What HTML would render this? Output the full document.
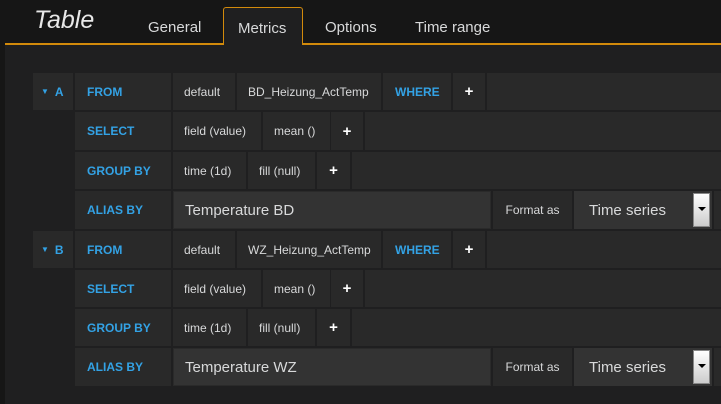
<!DOCTYPE html>
<html><head><style>
body{margin:0;width:721px;height:404px;background:#161616;position:relative;overflow:hidden;font-family:"Liberation Sans",sans-serif;}
.a{position:absolute;box-sizing:border-box;}
.c{position:absolute;background:#292929;color:#d8d9da;font-size:12px;display:flex;align-items:center;box-sizing:border-box;padding-left:11px;white-space:nowrap;}
.l{color:#33a2e5;font-weight:bold;font-size:12px;padding-left:12px;}
.p{justify-content:center;padding:0;font-weight:bold;font-size:15px;color:#fff;}
.in{background:#333;font-size:15px;border:1px solid #2a2a2a;}
.fa{font-size:12px;justify-content:center;padding:0;}
.sel{font-size:15px;background:#333;padding-left:15px;}
.btn{position:absolute;right:2px;top:2px;bottom:2px;width:17px;background:linear-gradient(#fff,#ccc);border:1px solid #888;box-sizing:border-box;}
.btn:after{content:"";position:absolute;left:4px;top:13px;border:4px solid transparent;border-top:4px solid #000;}
.tab{position:absolute;top:19px;color:#d8d9da;font-size:15px;}
</style></head><body>
<div class="a" style="left:5px;top:45px;width:716px;height:359px;background:#1f1f20"></div>
<div class="a" style="left:5px;top:43px;width:716px;height:2px;background:#d28a0b"></div>
<div class="a" style="left:34px;top:6px;color:#e8e8e8;font-size:25px;font-style:italic">Table</div>
<div class="tab" style="left:148px">General</div>
<div class="a" style="left:223px;top:7px;width:80px;height:38px;background:#1f1f20;border:1px solid #d28a0b;border-bottom:none;border-radius:3px 3px 0 0"></div>
<div class="tab" style="left:238px;top:20px">Metrics</div>
<div class="tab" style="left:325px">Options</div>
<div class="tab" style="left:415px">Time range</div>

<!-- A -->
<div class="c l" style="left:33px;top:73px;width:40px;height:37px;padding-left:8px"><span style="font-size:8px;margin-right:6px">▼</span>A</div>
<div class="c l" style="left:75px;top:73px;width:96px;height:37px">FROM</div>
<div class="c" style="left:173px;top:73px;width:62px;height:37px">default</div>
<div class="c" style="left:237px;top:73px;width:144px;height:37px">BD_Heizung_ActTemp</div>
<div class="c l" style="left:383px;top:73px;width:68px;height:37px">WHERE</div>
<div class="c p" style="left:453px;top:73px;width:32px;height:37px">+</div>
<div class="c" style="left:487px;top:73px;width:234px;height:37px"></div>

<div class="c l" style="left:75px;top:112px;width:96px;height:38px">SELECT</div>
<div class="c" style="left:173px;top:112px;width:88px;height:38px">field (value)</div>
<div class="c" style="left:263px;top:112px;width:67px;height:38px">mean ()</div>
<div class="c p" style="left:331px;top:112px;width:32px;height:38px">+</div>
<div class="c" style="left:365px;top:112px;width:356px;height:38px"></div>

<div class="c l" style="left:75px;top:152px;width:96px;height:37px">GROUP BY</div>
<div class="c" style="left:173px;top:152px;width:73px;height:37px">time (1d)</div>
<div class="c" style="left:248px;top:152px;width:67px;height:37px">fill (null)</div>
<div class="c p" style="left:317px;top:152px;width:33px;height:37px">+</div>
<div class="c" style="left:352px;top:152px;width:369px;height:37px"></div>

<div class="c l" style="left:75px;top:191px;width:96px;height:38px">ALIAS BY</div>
<div class="c in" style="left:173px;top:191px;width:318px;height:38px">Temperature BD</div>
<div class="c fa" style="left:493px;top:191px;width:79px;height:38px">Format as</div>
<div class="c sel" style="left:574px;top:191px;width:138px;height:38px">Time series<div class="btn"></div></div>
<div class="c" style="left:714px;top:191px;width:7px;height:38px"></div>

<!-- B -->
<div class="c l" style="left:33px;top:231px;width:40px;height:37px;padding-left:8px"><span style="font-size:8px;margin-right:6px">▼</span>B</div>
<div class="c l" style="left:75px;top:231px;width:96px;height:37px">FROM</div>
<div class="c" style="left:173px;top:231px;width:62px;height:37px">default</div>
<div class="c" style="left:237px;top:231px;width:144px;height:37px">WZ_Heizung_ActTemp</div>
<div class="c l" style="left:383px;top:231px;width:68px;height:37px">WHERE</div>
<div class="c p" style="left:453px;top:231px;width:32px;height:37px">+</div>
<div class="c" style="left:487px;top:231px;width:234px;height:37px"></div>

<div class="c l" style="left:75px;top:270px;width:96px;height:37px">SELECT</div>
<div class="c" style="left:173px;top:270px;width:88px;height:37px">field (value)</div>
<div class="c" style="left:263px;top:270px;width:67px;height:37px">mean ()</div>
<div class="c p" style="left:331px;top:270px;width:32px;height:37px">+</div>
<div class="c" style="left:365px;top:270px;width:356px;height:37px"></div>

<div class="c l" style="left:75px;top:309px;width:96px;height:37px">GROUP BY</div>
<div class="c" style="left:173px;top:309px;width:73px;height:37px">time (1d)</div>
<div class="c" style="left:248px;top:309px;width:67px;height:37px">fill (null)</div>
<div class="c p" style="left:317px;top:309px;width:33px;height:37px">+</div>
<div class="c" style="left:352px;top:309px;width:369px;height:37px"></div>

<div class="c l" style="left:75px;top:348px;width:96px;height:38px">ALIAS BY</div>
<div class="c in" style="left:173px;top:348px;width:318px;height:38px">Temperature WZ</div>
<div class="c fa" style="left:493px;top:348px;width:79px;height:38px">Format as</div>
<div class="c sel" style="left:574px;top:348px;width:138px;height:38px">Time series<div class="btn"></div></div>
<div class="c" style="left:714px;top:348px;width:7px;height:38px"></div>
</body></html>
